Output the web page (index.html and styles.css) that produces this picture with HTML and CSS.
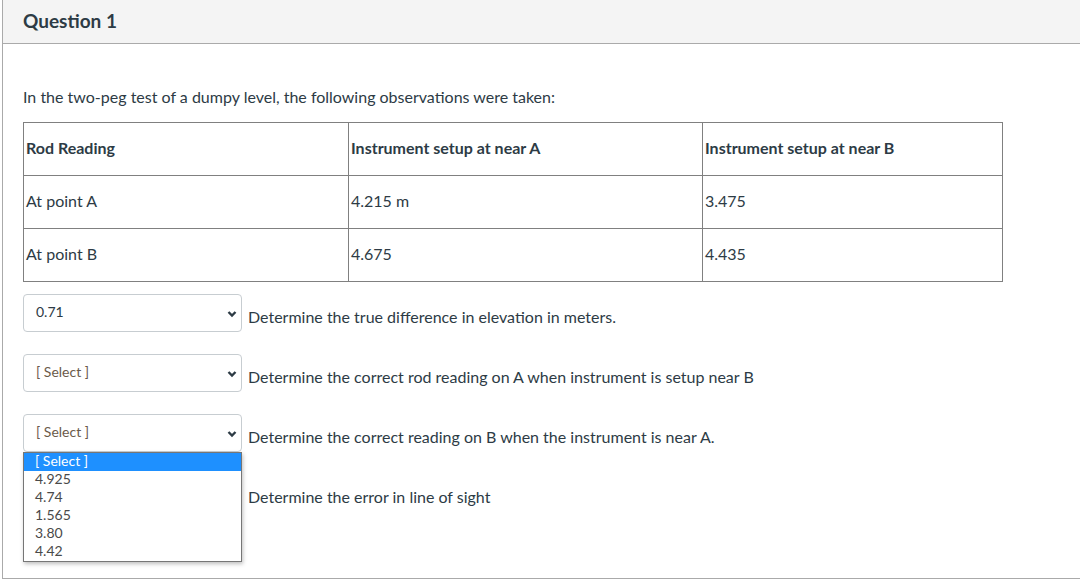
FILE: index.html
```html
<!DOCTYPE html>
<html lang="en">
<head>
  <meta charset="UTF-8">
  <title>Question 1</title>
  <link rel="stylesheet" href="styles.css">
</head>
<body>
  <div class="question">
    <div class="question-header">Question 1</div>
    <div class="question-body">
      <p class="intro">In the two-peg test of a dumpy level, the following observations were taken:</p>
      <table class="readings">
        <tr>
          <th class="col-rod">Rod Reading</th>
          <th class="col-a">Instrument setup at near A</th>
          <th class="col-b">Instrument setup at near B</th>
        </tr>
        <tr>
          <td>At point A</td>
          <td>4.215 m</td>
          <td>3.475</td>
        </tr>
        <tr>
          <td>At point B</td>
          <td>4.675</td>
          <td>4.435</td>
        </tr>
      </table>

      <div class="answers">
        <div class="answer-row">
          <div class="select"><span class="select-value filled">0.71</span><svg class="chevron" viewBox="0 0 10 8" width="10" height="8"><path d="M1.5 2 L5 5.5 L8.5 2" fill="none" stroke="#2d3b45" stroke-width="2.4"/></svg></div>
          <span class="answer-label">Determine the true difference in elevation in meters.</span>
        </div>
        <div class="answer-row">
          <div class="select"><span class="select-value">[ Select ]</span><svg class="chevron" viewBox="0 0 10 8" width="10" height="8"><path d="M1.5 2 L5 5.5 L8.5 2" fill="none" stroke="#2d3b45" stroke-width="2.4"/></svg></div>
          <span class="answer-label">Determine the correct rod reading on A when instrument is setup near B</span>
        </div>
        <div class="answer-row">
          <div class="select open"><span class="select-value">[ Select ]</span><svg class="chevron" viewBox="0 0 10 8" width="10" height="8"><path d="M1.5 2 L5 5.5 L8.5 2" fill="none" stroke="#2d3b45" stroke-width="2.4"/></svg>
            <ul class="options">
              <li class="active">[ Select ]</li>
              <li>4.925</li>
              <li>4.74</li>
              <li>1.565</li>
              <li>3.80</li>
              <li>4.42</li>
            </ul>
          </div>
          <span class="answer-label">Determine the correct reading on B when the instrument is near A.</span>
        </div>
        <div class="answer-row">
          <!-- covered by the open list above -->
          <div class="select covered"><span class="select-value">[ Select ]</span></div>
          <span class="answer-label">Determine the error in line of sight</span>
        </div>
      </div>
    </div>
  </div>
</body>
</html>
```

FILE: styles.css
```css
body {
  margin: 0;
  font-family: Lato, "Noto Sans", sans-serif;
  color: #2d3b45;
  background-color: #fff;
}
.question {
  margin-left: 2px;
  height: 578px;
  border-left: 1px solid #aaa;
  border-bottom: 1px solid #aaa;
}
.question-header {
  height: 43px;
  line-height: 41px;
  padding-left: 20px;
  background-color: #f4f4f4;
  border-bottom: 1px solid #aaa;
  font-size: 19px;
  font-weight: bold;
  color: #2d3b45;
}
.question-body {
  padding: 0 20px;
}
.intro {
  margin: 42px 0 0;
  font-size: 16px;
  line-height: 22px;
}
.readings {
  margin-top: 14px;
  border-collapse: collapse;
  width: 980px;
  font-size: 16px;
}
.readings th,
.readings td {
  height: 48px;
  padding: 0 2px 4px;
  border: 1px solid #808080;
  text-align: left;
  vertical-align: middle;
}
.readings th {
  font-weight: bold;
}
.col-rod { width: 320px; }
.col-a { width: 349px; }
.answers {
  margin-top: 12px;
}
.answer-row {
  display: flex;
  align-items: center;
  height: 38px;
  margin-bottom: 22px;
}
.select {
  position: relative;
  box-sizing: border-box;
  width: 219px;
  height: 38px;
  border: 1px solid #c7cdd1;
  border-radius: 4px;
  background-color: #fff;
  display: flex;
  align-items: center;
  justify-content: space-between;
  padding: 0 4px 0 12px;
}
.select-value {
  font-size: 14px;
  color: #6b5a4a;
  margin-top: -3px;
}
.select-value.filled {
  color: #2d3b45;
}
.select.covered .select-value {
  visibility: hidden;
}
.chevron {
  margin-top: 2px;
}
.answer-label {
  margin-left: 6px;
  margin-top: 6px;
  font-size: 16px;
}
.options {
  position: absolute;
  top: 37px;
  left: -1px;
  z-index: 2;
  width: 219px;
  box-sizing: border-box;
  margin: 0;
  padding: 0;
  list-style: none;
  background-color: #fff;
  border: 1px solid #767676;
  box-shadow: 1px 2px 4px rgba(0, 0, 0, 0.25);
}
.options li {
  height: 18px;
  line-height: 16px;
  padding-left: 11px;
  font-size: 14px;
  color: #4a4a4a;
}
.options li.active {
  background-color: #1e90ff;
  color: #fff;
}
```
